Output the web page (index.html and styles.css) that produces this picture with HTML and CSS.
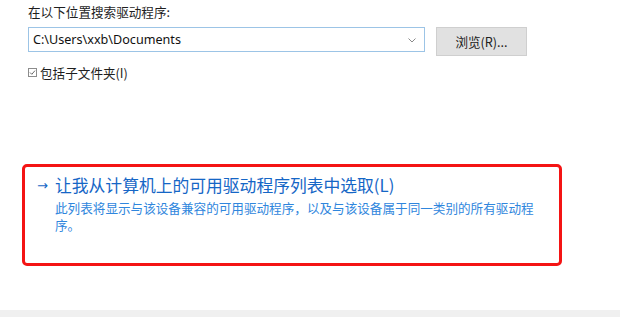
FILE: index.html
```html
<!DOCTYPE html>
<html lang="zh-CN">
<head>
<meta charset="utf-8">
<link rel="stylesheet" href="styles.css">
</head>
<body>
<div class="page">
  <div class="label">在以下位置搜索驱动程序:</div>
  <div class="pathrow">
    <div class="combo">
      <span class="combo-text">C:\Users\xxb\Documents</span>
      <svg class="chev" width="8" height="5" viewBox="0 0 8 5"><path d="M0.5 0.5 L4 4 L7.5 0.5" fill="none" stroke="#8a8a8a" stroke-width="1"/></svg>
    </div>
    <div class="btn">浏览(R)...</div>
  </div>
  <div class="check">
    <svg class="cb" width="9" height="9" viewBox="0 0 9 9"><rect x="0.5" y="0.5" width="8" height="8" fill="#fff" stroke="#8c8c8c"/><path d="M2 4.5 L3.8 6.3 L7 2.6" fill="none" stroke="#6a6a6a" stroke-width="1"/></svg>
    <span>包括子文件夹(I)</span>
  </div>
  <div class="highlight">
    <div class="link-title"><span class="arrow">→</span><span>让我从计算机上的可用驱动程序列表中选取(L)</span></div>
    <div class="link-desc">此列表将显示与该设备兼容的可用驱动程序，以及与该设备属于同一类别的所有驱动程序。</div>
  </div>
  <div class="footer"></div>
</div>
</body>
</html>
```
FILE: styles.css
```css
html, body {
  margin: 0;
  padding: 0;
  background: #ffffff;
}
.page {
  width: 620px;
  height: 317px;
  display: flex;
  flex-direction: column;
  font-family: "Noto Sans", "Noto Sans CJK SC", sans-serif;
  color: #1e1e1e;
  font-size: 12.6px;
}
.label {
  margin: 3px 0 0 28px;
  line-height: 18px;
  font-family: "Noto Sans CJK SC", sans-serif;
}
.pathrow {
  display: flex;
  align-items: flex-start;
  margin: 6px 0 0 28px;
}
.combo {
  height: 23px;
  border: 1px solid #9cc4e6;
  display: flex;
  align-items: center;
  justify-content: space-between;
  padding: 0 8px 0 4px;
  width: 383px;
}
.combo-text {
  font-family: "Noto Sans", sans-serif;
  font-size: 12.6px;
  color: #111;
}
.chev {
  margin-top: 1px;
}
.btn {
  margin-left: 11px;
  width: 89px;
  height: 27px;
  border: 1px solid #cfcfcf;
  background: #e1e1e1;
  display: flex;
  align-items: center;
  justify-content: center;
  font-family: "Noto Sans CJK SC", sans-serif;
  color: #222;
}
.check {
  display: flex;
  align-items: center;
  margin: 7px 0 0 28px;
  height: 18px;
  font-family: "Noto Sans CJK SC", sans-serif;
}
.cb {
  margin-right: 3px;
}
.highlight {
  margin: 83px 0 0 22px;
  width: 534px;
  height: 96px;
  border: 3px solid #f41414;
  border-radius: 5px;
  font-family: "Noto Sans CJK SC", sans-serif;
}
.link-title {
  display: flex;
  align-items: center;
  margin-top: 8.5px;
  color: #1566c6;
  font-size: 16.8px;
  line-height: 19px;
}
.arrow {
  width: 18px;
  margin-left: 12px;
  margin-right: 0;
  font-size: 13px;
  font-family: "DejaVu Sans", sans-serif;
}
.link-desc {
  margin: 4px 0 0 30px;
  width: 490px;
  color: #2f86dd;
  font-size: 12.6px;
  line-height: 17px;
}
.footer {
  margin-top: auto;
  height: 7px;
  background: #f0f0f0;
}
```
